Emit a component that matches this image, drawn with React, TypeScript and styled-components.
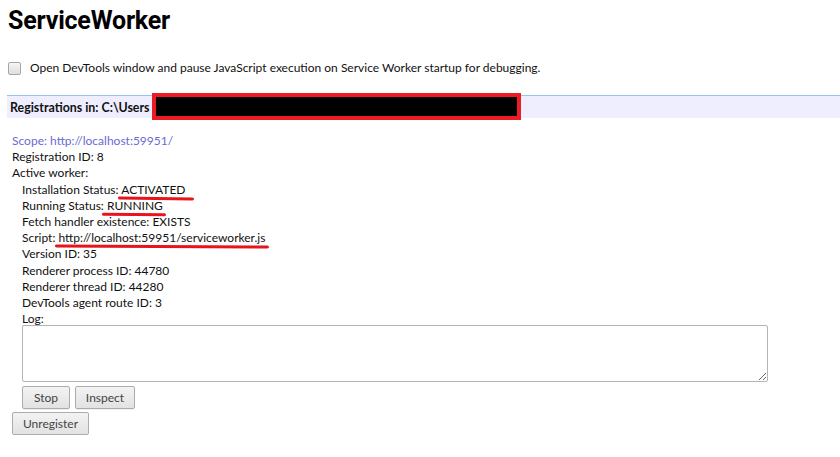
import React, { FC } from 'react';
import styled, { createGlobalStyle } from 'styled-components';

const GlobalStyle = createGlobalStyle`
    html, body {
        margin: 0;
        padding: 0;
        background: #fff;
        overflow: hidden;
    }
    body {
        font-family: Lato, "Open Sans", sans-serif;
        color: #111;
    }
`;

const Page = styled.div`
    padding: 0 8px;
`;

const Title = styled.h1`
    margin: 0;
    padding-top: 6px;
    font-family: Roboto, Lato, sans-serif;
    font-size: 25px;
    line-height: 30px;
    font-weight: 700;
    letter-spacing: -0.2px;
    color: #000;
`;

const CheckRow = styled.label`
    display: flex;
    align-items: center;
    gap: 9px;
    margin-top: 24px;
    font-size: 12px;
    line-height: 16px;
`;

const Checkbox = styled.input.attrs({ type: 'checkbox' })`
    appearance: none;
    margin: 0;
    width: 13px;
    height: 13px;
    border: 1px solid #a6a6a6;
    border-radius: 2px;
    background: linear-gradient(#f6f6f6, #dedede);
`;

const RegHeader = styled.div`
    display: flex;
    align-items: center;
    margin: 19px -8px 0 -1px;
    height: 22px;
    padding-left: 3px;
    border-top: 1px solid #9ec1ec;
    background: #eeeeff;
    font-size: 12.4px;
    font-weight: 700;
`;

const Redaction = styled.span`
    display: inline-block;
    width: 361px;
    height: 19px;
    margin: -1px 0 0 2px;
    background: #000;
    border: 4px solid #ed1c24;
`;

const Registration = styled.div`
    padding: 15px 0 0 4px;
    font-size: 12px;
    line-height: 16.2px;
`;

const Scope = styled.div`
    color: #6a6ad6;
`;

const Worker = styled.div`
    padding-left: 10px;
`;

const Mark = styled.span<{ $left: number; $right: number; $tilt: number }>`
    position: relative;

    &::after {
        content: '';
        position: absolute;
        left: ${p => p.$left}px;
        right: ${p => p.$right}px;
        bottom: -3px;
        height: 3px;
        border-radius: 2px;
        background: #e8141c;
        transform: rotate(${p => p.$tilt}deg);
    }
`;

const Log = styled.textarea`
    display: block;
    box-sizing: border-box;
    width: 746px;
    height: 57px;
    margin-top: -2px;
    border: 1px solid #b4b4b4;
    border-radius: 2px;
    font-family: inherit;
`;

const ButtonRow = styled.div`
    display: flex;
    gap: 5px;
    margin-top: 4px;
`;

const Button = styled.button<{ $width: number }>`
    display: block;
    box-sizing: border-box;
    width: ${p => p.$width}px;
    height: 23px;
    padding: 0;
    border: 1px solid #acacac;
    border-radius: 2px;
    background: linear-gradient(#f3f3f3, #e2e2e2);
    box-shadow: 0 1px 0 rgba(0, 0, 0, 0.06);
    font-family: Lato, "Open Sans", sans-serif;
    font-size: 12px;
    color: #444;
`;

const Unregister = styled(Button)`
    margin-top: 3px;
`;

const App: FC = () => {
    return (
        <Page>
            <GlobalStyle />
            <Title>ServiceWorker</Title>

            <CheckRow>
                <Checkbox />
                Open DevTools window and pause JavaScript execution on Service Worker startup for debugging.
            </CheckRow>

            <RegHeader>
                Registrations in: C:\Users
                <Redaction />
            </RegHeader>

            <Registration>
                <Scope>Scope: http://localhost:59951/</Scope>
                <div>Registration ID: 8</div>
                <div>Active worker:</div>
                <Worker>
                    <div>
                        Installation Status:<Mark $left={-1} $right={-8} $tilt={0.6}> ACTIVATED</Mark>
                    </div>
                    <div>
                        Running Status:<Mark $left={-2} $right={-3} $tilt={0.5}> RUNNING</Mark>
                    </div>
                    <div>Fetch handler existence: EXISTS</div>
                    <div>
                        Script:<Mark $left={0} $right={-4} $tilt={0.3}> http://localhost:59951/serviceworker.js</Mark>
                    </div>
                    <div>Version ID: 35</div>
                    <div>Renderer process ID: 44780</div>
                    <div>Renderer thread ID: 44280</div>
                    <div>DevTools agent route ID: 3</div>
                    <div>Log:</div>
                    <Log />
                    <ButtonRow>
                        <Button $width={48}>Stop</Button>
                        <Button $width={60}>Inspect</Button>
                    </ButtonRow>
                </Worker>
                <Unregister $width={77}>Unregister</Unregister>
            </Registration>
        </Page>
    );
};

export default App;
